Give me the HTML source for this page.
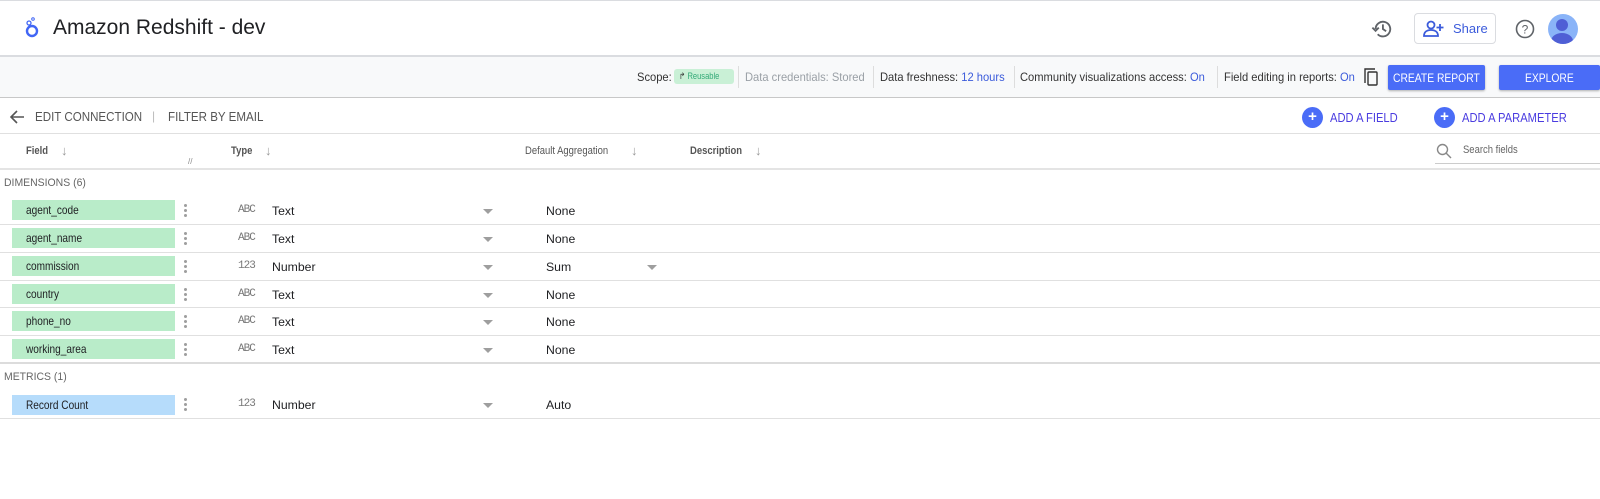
<!DOCTYPE html>
<html><head><meta charset="utf-8"><style>
*{box-sizing:border-box;margin:0;padding:0}
body{width:1600px;height:499px;overflow:hidden;background:#fff;font-family:"Liberation Sans",sans-serif;color:#202124;position:relative}
.a{position:absolute;white-space:nowrap}
.c{transform:scaleX(.86);transform-origin:0 0}
.g{transform:scaleX(.93);transform-origin:0 0}
.hl{position:absolute;left:0;right:0;height:1px;background:#e0e0e0}
.pill{position:absolute;left:12px;width:163px;height:20px;background:#b9ecc9}
.pill span{position:absolute;left:14px;top:3px;font-size:12px;transform:scaleX(.84);transform-origin:0 0;white-space:nowrap}
.dots{position:absolute;left:184px;width:3px}
.dots i{display:block;width:3px;height:3px;border-radius:50%;background:#9e9e9e;margin-bottom:2px}
.ic{position:absolute;left:238px;font-size:11px;color:#777;font-family:"Liberation Mono",monospace;letter-spacing:-1px}
.t{position:absolute;left:272px;font-size:12px;transform:scaleX(1.02);transform-origin:0 0}
.ag{position:absolute;left:546px;font-size:12px;transform:scaleX(1.02);transform-origin:0 0}
.dd{position:absolute;width:0;height:0;border-left:5px solid transparent;border-right:5px solid transparent;border-top:5px solid #9e9e9e}
.sep{position:absolute;top:66px;width:1px;height:22px;background:#ddd}
.btn{position:absolute;top:65px;height:25px;background:#4a6cf7;border-radius:2px;box-shadow:0 1px 2px rgba(0,0,0,.3)}
.btn span{position:absolute;top:6px;color:#fff;font-size:12px;transform:scaleX(.86);transform-origin:0 0;white-space:nowrap}
</style></head><body>
<div class="hl" style="top:0;background:#dadce0"></div>
<svg class="a" style="left:22px;top:17px" width="20" height="22" viewBox="0 0 20 22"><circle cx="10" cy="14" r="5" fill="none" stroke="#4166f5" stroke-width="2.4"/><circle cx="7" cy="6" r="2" fill="none" stroke="#4166f5" stroke-width="1.3"/><circle cx="11" cy="2" r="1.3" fill="none" stroke="#4166f5" stroke-width="1"/></svg>
<div class="a" style="left:53px;top:16px;font-size:21px;color:#202124">Amazon Redshift - dev</div>
<svg class="a" style="left:1371px;top:18px" width="22" height="22" viewBox="0 0 24 24"><path d="M5 12a8 8 0 1 1 2.3 5.7" fill="none" stroke="#5f6368" stroke-width="2"/><path d="M1.5 10.5L5 14l3.5-3.5" fill="none" stroke="#5f6368" stroke-width="2"/><path d="M13 7v5l3.5 2.5" fill="none" stroke="#5f6368" stroke-width="2"/></svg>
<div class="a" style="left:1414px;top:13px;width:82px;height:31px;border:1px solid #dadce0;border-radius:4px"></div>
<svg class="a" style="left:1423px;top:20px" width="22" height="18" viewBox="0 0 22 18"><circle cx="8" cy="5" r="3.5" fill="none" stroke="#3b5bdb" stroke-width="1.8"/><path d="M1 16c0-4 3-6 7-6s7 2 7 6z" fill="none" stroke="#3b5bdb" stroke-width="1.8"/><path d="M17 4v7M13.5 7.5h7" stroke="#3b5bdb" stroke-width="1.8"/></svg>
<div class="a" style="left:1453px;top:21px;font-size:13px;color:#3b5bdb">Share</div>
<svg class="a" style="left:1515px;top:19px" width="20" height="20" viewBox="0 0 20 20"><circle cx="10" cy="10" r="8.5" fill="none" stroke="#5f6368" stroke-width="1.6"/><text x="10" y="14.5" text-anchor="middle" font-size="12" font-family="Liberation Sans" fill="#5f6368">?</text></svg>
<div class="a" style="left:1548px;top:14px;width:30px;height:30px;border-radius:50%;background:#8ab4f8;overflow:hidden"><div style="position:absolute;left:8px;top:5px;width:12px;height:12px;border-radius:50%;background:#4f5fd5"></div><div style="position:absolute;left:3px;top:19px;width:22px;height:16px;border-radius:50%;background:#4f5fd5"></div></div>
<div class="hl" style="top:55px;height:2px;background:#dadce0"></div>
<div class="a" style="left:0;top:57px;width:1600px;height:40px;background:#f8f9fa"></div>
<div class="hl" style="top:97px;background:#c8c8c8"></div>
<div class="a g" style="top:70px;left:637px;font-size:12px;color:#333">Scope:</div>
<div class="a" style="left:674px;top:69px;width:60px;height:15px;background:#c9f0d6;border-radius:3px"><span class="a" style="left:5px;top:2px;font-size:9px;color:#3a7;transform:scaleX(.84);transform-origin:0 0"><span style="color:#333">↱</span> Reusable</span></div>
<div class="sep" style="left:738px"></div>
<div class="a g" style="left:745px;top:70px;font-size:12px;color:#9aa0a6">Data credentials: Stored</div>
<div class="sep" style="left:873px"></div>
<div class="a g" style="left:880px;top:70px;font-size:12px;color:#333">Data freshness: <span style="color:#3b5bdb">12 hours</span></div>
<div class="sep" style="left:1014px"></div>
<div class="a g" style="left:1020px;top:70px;font-size:12px;color:#333">Community visualizations access: <span style="color:#3b5bdb">On</span></div>
<div class="sep" style="left:1217px"></div>
<div class="a g" style="left:1224px;top:70px;font-size:12px;color:#333">Field editing in reports: <span style="color:#3b5bdb">On</span></div>
<svg class="a" style="left:1362px;top:67px" width="18" height="20" viewBox="0 0 18 20"><path d="M3 16V2h10" fill="none" stroke="#333" stroke-width="1.4"/><rect x="6" y="5" width="9" height="13" rx="1" fill="none" stroke="#333" stroke-width="1.4"/></svg>
<div class="btn" style="left:1388px;width:97px"><span style="left:5px">CREATE REPORT</span></div>
<div class="btn" style="left:1499px;width:101px"><span style="left:26px">EXPLORE</span></div>
<svg class="a" style="left:9px;top:109px" width="16" height="16" viewBox="0 0 16 16"><path d="M15 8H2M8 2L2 8l6 6" fill="none" stroke="#555" stroke-width="1.6"/></svg>
<div class="a c" style="left:35px;top:109px;font-size:13px;color:#555;transform:scaleX(.89)">EDIT CONNECTION</div>
<div class="a" style="left:152px;top:109px;font-size:12px;color:#bbb">|</div>
<div class="a c" style="left:168px;top:109px;font-size:13px;color:#555;transform:scaleX(.89)">FILTER BY EMAIL</div>
<div class="a" style="left:1302px;top:107px;width:21px;height:21px;border-radius:50%;background:#4a6cf7;color:#fff;text-align:center;font-size:15px;line-height:20px;font-weight:bold">+</div>
<div class="a c" style="left:1330px;top:110px;font-size:13px;color:#4a3ce0">ADD A FIELD</div>
<div class="a" style="left:1434px;top:107px;width:21px;height:21px;border-radius:50%;background:#4a6cf7;color:#fff;text-align:center;font-size:15px;line-height:20px;font-weight:bold">+</div>
<div class="a c" style="left:1462px;top:110px;font-size:13px;color:#4a3ce0">ADD A PARAMETER</div>
<div class="hl" style="top:133px;background:#e0e0e0"></div>
<div class="a c" style="left:26px;top:145px;font-size:11px;color:#555;font-weight:bold">Field</div>
<div class="a" style="left:61px;top:143px;font-size:13px;color:#999">↓</div>
<div class="a" style="left:188px;top:157px;font-size:8px;color:#888">//</div>
<div class="a c" style="left:231px;top:145px;font-size:11px;color:#555;font-weight:bold">Type</div>
<div class="a" style="left:265px;top:143px;font-size:13px;color:#999">↓</div>
<div class="a c" style="left:525px;top:145px;font-size:11px;color:#555">Default Aggregation</div>
<div class="a" style="left:631px;top:143px;font-size:13px;color:#999">↓</div>
<div class="a c" style="left:690px;top:145px;font-size:11px;color:#555;font-weight:bold">Description</div>
<div class="a" style="left:755px;top:143px;font-size:13px;color:#999">↓</div>
<svg class="a" style="left:1436px;top:143px" width="16" height="16" viewBox="0 0 16 16"><circle cx="6.5" cy="6.5" r="5" fill="none" stroke="#888" stroke-width="1.4"/><path d="M10 10l5 5" stroke="#888" stroke-width="1.4"/></svg>
<div class="a c" style="left:1463px;top:144px;font-size:11px;color:#666">Search fields</div>
<div class="a" style="left:1435px;top:163px;width:165px;height:1px;background:#ccc"></div>
<div class="hl" style="top:168px;height:2px;background:#e4e4e4"></div>
<div class="a c" style="left:4px;top:177px;font-size:11px;color:#666;transform:scaleX(.95)">DIMENSIONS (6)</div>

<div class="pill" style="top:200px"><span>agent_code</span></div><div class="dots" style="top:204px"><i></i><i></i><i></i></div><div class="ic" style="top:204px">ABC</div><div class="t" style="top:204px">Text</div><div class="dd" style="left:483px;top:209px"></div><div class="ag" style="top:204px">None</div>
<div class="hl" style="top:224px"></div>
<div class="pill" style="top:228px"><span>agent_name</span></div><div class="dots" style="top:232px"><i></i><i></i><i></i></div><div class="ic" style="top:232px">ABC</div><div class="t" style="top:232px">Text</div><div class="dd" style="left:483px;top:237px"></div><div class="ag" style="top:232px">None</div>
<div class="hl" style="top:252px"></div>
<div class="pill" style="top:256px"><span>commission</span></div><div class="dots" style="top:260px"><i></i><i></i><i></i></div><div class="ic" style="top:260px">123</div><div class="t" style="top:260px">Number</div><div class="dd" style="left:483px;top:265px"></div><div class="ag" style="top:260px">Sum</div><div class="dd" style="left:647px;top:265px"></div>
<div class="hl" style="top:280px"></div>
<div class="pill" style="top:284px"><span>country</span></div><div class="dots" style="top:288px"><i></i><i></i><i></i></div><div class="ic" style="top:288px">ABC</div><div class="t" style="top:288px">Text</div><div class="dd" style="left:483px;top:293px"></div><div class="ag" style="top:288px">None</div>
<div class="hl" style="top:307px"></div>
<div class="pill" style="top:311px"><span>phone_no</span></div><div class="dots" style="top:315px"><i></i><i></i><i></i></div><div class="ic" style="top:315px">ABC</div><div class="t" style="top:315px">Text</div><div class="dd" style="left:483px;top:320px"></div><div class="ag" style="top:315px">None</div>
<div class="hl" style="top:335px"></div>
<div class="pill" style="top:339px"><span>working_area</span></div><div class="dots" style="top:343px"><i></i><i></i><i></i></div><div class="ic" style="top:343px">ABC</div><div class="t" style="top:343px">Text</div><div class="dd" style="left:483px;top:348px"></div><div class="ag" style="top:343px">None</div>
<div class="hl" style="top:362px;height:2px;background:#dcdcdc"></div>
<div class="a c" style="left:4px;top:371px;font-size:11px;color:#666;transform:scaleX(.95)">METRICS (1)</div>
<div class="pill" style="top:395px;background:#b6dcfb"><span>Record Count</span></div><div class="dots" style="top:398px"><i></i><i></i><i></i></div><div class="ic" style="top:398px">123</div><div class="t" style="top:398px">Number</div><div class="dd" style="left:483px;top:403px"></div><div class="ag" style="top:398px">Auto</div>
<div class="hl" style="top:418px"></div>
</body></html>
